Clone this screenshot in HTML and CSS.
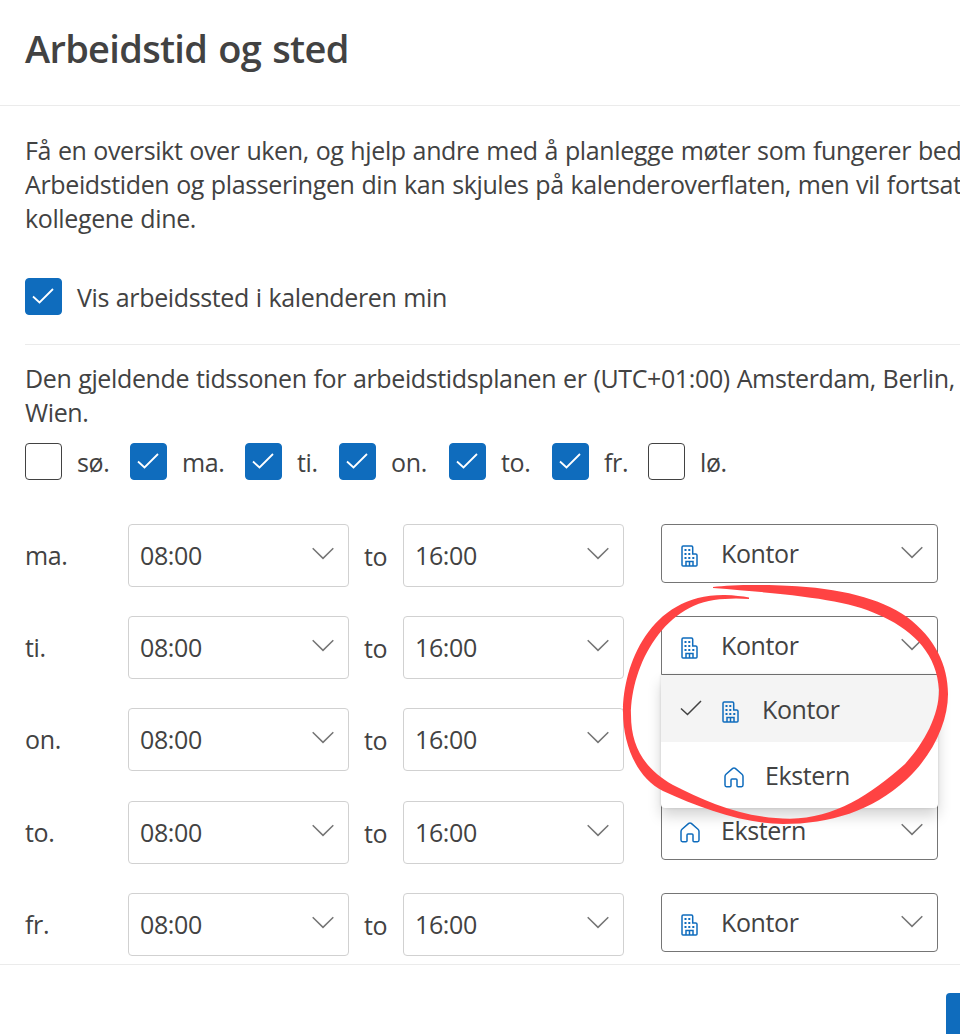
FILE: index.html
```html
<!DOCTYPE html>
<html lang="nb">
<head>
    <meta charset="UTF-8">
    <meta name="viewport" content="width=device-width, initial-scale=1.0">
    <title>Arbeidstid og sted</title>
    <link rel="stylesheet" href="styles.css">
</head>
<body>
    <svg class="sprite">
        <symbol id="check" viewBox="0 0 22 16"><path d="M1 8.500l6.500 6L21 1"/></symbol>
        <symbol id="chevron" viewBox="0 0 22 13"><path d="M.7 1.200L11 11.400 21.300 1.200"/></symbol>
        <symbol id="office" viewBox="0 0 17 22">
            <path d="M1 20V2.200Q1 1 2.200 1h8.300q1.200 0 1.200 1.200V9h3q1.300 0 1.300 1.300V20q0 1-1 1H2q-1 0-1-1z"/>
            <path d="M5 21v-4.500h7V21M8.500 16.500V21"/>
            <path class="dots" d="M3.500 4h2v2h-2zM7.300 4h2v2h-2zM3.500 8h2v2h-2zM7.300 8h2v2h-2zM3.500 12h2v2h-2zM7.300 12h2v2h-2zM11.300 12h2v2h-2z"/>
        </symbol>
        <symbol id="home" viewBox="0 0 20 21"><path d="M8.700 1.400Q10 .5 11.300 1.400L18 7.300q1 .9 1 2.200V18q0 1.700-1.500 1.700H14q-1 0-1-1V13q0-1-1-1H8q-1 0-1 1v5.700q0 1-1 1H2.500Q1 19.700 1 18V9.500q0-1.300 1-2.200z"/></symbol>
    </svg>

    <header class="header">
        <h1 class="title">Arbeidstid og sted</h1>
    </header>

    <main class="main">
        <p class="intro"><span class="line">Få en oversikt over uken, og hjelp andre med å planlegge møter som fungerer bed</span><span class="line">Arbeidstiden og plasseringen din kan skjules på kalenderoverflaten, men vil fortsat</span><span class="line">kollegene dine.</span></p>

        <div class="option">
            <span class="box checked"><svg><use href="#check"/></svg></span>
            <span class="option-text">Vis arbeidssted i kalenderen min</span>
        </div>

        <p class="zone"><span class="line">Den gjeldende tidssonen for arbeidstidsplanen er (UTC+01:00) Amsterdam, Berlin,</span><span class="line">Wien.</span></p>

        <div class="days">
            <div class="day so"><span class="box"></span>sø.</div>
            <div class="day ma"><span class="box checked"><svg><use href="#check"/></svg></span>ma.</div>
            <div class="day ti"><span class="box checked"><svg><use href="#check"/></svg></span>ti.</div>
            <div class="day on"><span class="box checked"><svg><use href="#check"/></svg></span>on.</div>
            <div class="day to"><span class="box checked"><svg><use href="#check"/></svg></span>to.</div>
            <div class="day fr"><span class="box checked"><svg><use href="#check"/></svg></span>fr.</div>
            <div class="day"><span class="box"></span>lø.</div>
        </div>

        <div class="schedule">
            <div class="row">
                <span class="name">ma.</span>
                <div class="time"><span>08:00</span><svg class="chevron"><use href="#chevron"/></svg></div>
                <span class="until">to</span>
                <div class="time"><span>16:00</span><svg class="chevron"><use href="#chevron"/></svg></div>
                <div class="place"><svg class="office"><use href="#office"/></svg><span>Kontor</span><svg class="chevron"><use href="#chevron"/></svg></div>
            </div>
            <div class="row">
                <span class="name">ti.</span>
                <div class="time"><span>08:00</span><svg class="chevron"><use href="#chevron"/></svg></div>
                <span class="until">to</span>
                <div class="time"><span>16:00</span><svg class="chevron"><use href="#chevron"/></svg></div>
                <div class="place open"><svg class="office"><use href="#office"/></svg><span>Kontor</span><svg class="chevron"><use href="#chevron"/></svg>
                    <ul class="menu">
                        <li class="item selected"><svg class="tick"><use href="#check"/></svg><svg class="office"><use href="#office"/></svg><span>Kontor</span></li>
                        <li class="item"><svg class="home"><use href="#home"/></svg><span>Ekstern</span></li>
                    </ul>
                </div>
            </div>
            <div class="row">
                <span class="name">on.</span>
                <div class="time"><span>08:00</span><svg class="chevron"><use href="#chevron"/></svg></div>
                <span class="until">to</span>
                <div class="time"><span>16:00</span><svg class="chevron"><use href="#chevron"/></svg></div>
            </div>
            <div class="row">
                <span class="name">to.</span>
                <div class="time"><span>08:00</span><svg class="chevron"><use href="#chevron"/></svg></div>
                <span class="until">to</span>
                <div class="time"><span>16:00</span><svg class="chevron"><use href="#chevron"/></svg></div>
                <div class="place"><svg class="home"><use href="#home"/></svg><span>Ekstern</span><svg class="chevron"><use href="#chevron"/></svg></div>
            </div>
            <div class="row">
                <span class="name">fr.</span>
                <div class="time"><span>08:00</span><svg class="chevron"><use href="#chevron"/></svg></div>
                <span class="until">to</span>
                <div class="time"><span>16:00</span><svg class="chevron"><use href="#chevron"/></svg></div>
                <div class="place"><svg class="office"><use href="#office"/></svg><span>Kontor</span><svg class="chevron"><use href="#chevron"/></svg></div>
            </div>
        </div>
    </main>

    <footer class="footer">
        <div class="save"></div>
    </footer>

    <svg class="marker" viewBox="615 575 345 260">
        <path d="M713 587C730 584.500 765 584.500 787 585.700C840 588 880 598 907 617C935 638 948 665 948 694C948 722 933 755 906 780C872 811 830 824 783 824C745 824 700 808 663 791C637 778 623 745 623 712C623 665 650 594 725 595Q739 595.500 749 597.500V599Q735 598 725 599C665 600 631 665 631 715C631 745 643 768 673 785C706 802 745 818.700 790 818.700C835 818 870 795 905 764C925 742 939 715 939 690C937 655 915 632 883 616.700C850 600 800 595 713 588Z"/>
    </svg>
</body>
</html>
```

FILE: styles.css
```css
* {
    margin: 0;
    padding: 0;
    box-sizing: border-box;
}

body {
    position: relative;
    width: 960px;
    height: 1034px;
    overflow: hidden;
    display: flex;
    flex-direction: column;
    background-color: #fff;
    color: #424242;
    font-family: "Open Sans", "Noto Sans", sans-serif;
    font-size: 25px;
    line-height: 34px;
    letter-spacing: -0.37px;
    word-spacing: 0.7px;
}

svg {
    display: block;
    flex-shrink: 0;
    fill: none;
    stroke: currentColor;
    stroke-width: 1.5;
}

.sprite {
    display: none;
}

.header {
    height: 106px;
    padding: 23px 25px 0;
    border-bottom: 1px solid #ebebeb;
}

.title {
    font-size: 38px;
    font-weight: 600;
    line-height: 50px;
    letter-spacing: -0.7px;
    word-spacing: 2px;
}

.main {
    height: 858px;
    padding: 27px 0 0 25px;
}

.line {
    display: block;
    width: fit-content;
    white-space: nowrap;
}

.option {
    display: flex;
    gap: 15px;
    height: 110px;
    padding-top: 43px;
    border-bottom: 1px solid #ebebeb;
}

.option-text {
    padding-top: 2px;
}

.box {
    display: flex;
    align-items: center;
    justify-content: center;
    flex-shrink: 0;
    width: 37px;
    height: 37px;
    border: 1px solid #424242;
    border-radius: 4px;
}

.box svg {
    width: 22px;
    height: 16px;
    margin: 0 1px 1px 0;
    stroke-width: 1.8;
}

.checked {
    border-color: #0f6cbd;
    background-color: #0f6cbd;
    color: #fff;
}

.zone {
    padding-top: 16px;
}

.days {
    display: flex;
    padding-top: 14px;
}

.day {
    display: flex;
    gap: 15px;
    line-height: 38px;
    height: 37px;
}

.so {
    width: 105px;
}

.ma {
    width: 115px;
}

.ti {
    width: 94px;
}

.on {
    width: 110px;
}

.to {
    width: 103px;
}

.fr {
    width: 96px;
}

.schedule {
    padding-top: 43.9px;
}

.row {
    display: grid;
    grid-template-columns: 103px 221px 54px 221px 277px;
    height: 92.25px;
}

.name {
    padding-top: 14px;
}

.until {
    padding: 15px 0 0 15px;
}

.time {
    display: flex;
    justify-content: space-between;
    height: 63px;
    padding: 13px 14px 0 11px;
    border: 1px solid #d1d1d1;
    border-radius: 4px;
}

.chevron {
    width: 22px;
    height: 13px;
    margin-top: 9px;
    color: #757575;
}

.place {
    position: relative;
    display: grid;
    grid-template-columns: 41px 1fr 22px;
    height: 59px;
    margin-left: 37px;
    margin-right: -37px;
    padding: 11px 14px 0 18px;
    border: 1px solid #757575;
    border-radius: 4px;
}

.open {
    border-bottom-left-radius: 0;
    border-bottom-right-radius: 0;
}

.place > .chevron {
    margin-top: 10px;
}

.office {
    width: 17px;
    height: 22px;
    margin: 9px 0 0 1px;
    color: #0f6cbd;
}

.dots {
    fill: #0f6cbd;
    stroke: none;
}

.home {
    width: 20px;
    height: 21px;
    margin-top: 9px;
    color: #0f6cbd;
}

.menu {
    position: absolute;
    z-index: 1;
    top: 58px;
    left: -1px;
    width: 277px;
    height: 133px;
    list-style: none;
    background-color: #fff;
    border-radius: 0 0 4px 4px;
    box-shadow: 0 0 3px rgba(0, 0, 0, .14), 0 8px 14px rgba(0, 0, 0, .17);
}

.item {
    display: grid;
    grid-template-columns: 41px 1fr;
    height: 66px;
    padding: 16px 0 0 63px;
}

.selected {
    grid-template-columns: 41px 41px 1fr;
    height: 67px;
    padding: 17px 0 0 19px;
    background-color: #f4f4f4;
}

.tick {
    width: 22px;
    height: 16px;
    margin-top: 8px;
}

.footer {
    display: flex;
    justify-content: flex-end;
    height: 70px;
    padding-top: 28px;
    border-top: 1px solid #ebebeb;
}

.save {
    width: 14px;
    height: 42px;
    border-radius: 4px 0 0 0;
    background-color: #0f6cbd;
}

/* hand drawn ring around the open menu */
.marker {
    position: absolute;
    z-index: 2;
    left: 615px;
    top: 575px;
    width: 345px;
    height: 260px;
    fill: #ff4343;
    stroke: none;
}
```
